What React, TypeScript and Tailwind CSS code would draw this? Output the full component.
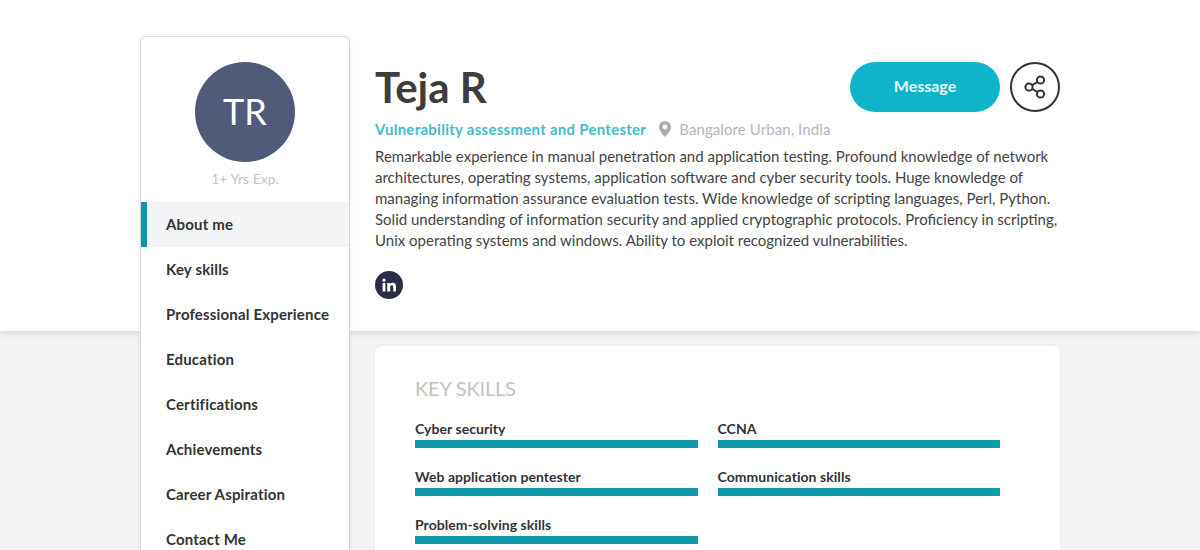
import React from "react";

const nav = ["About me", "Key skills", "Professional Experience", "Education", "Certifications", "Achievements", "Career Aspiration", "Contact Me"];
const skills = ["Cyber security", "CCNA", "Web application pentester", "Communication skills", "Problem-solving skills"];

export default function App() {
  return (
    <div className="h-[550px] overflow-hidden bg-[#f3f3f3] font-['Lato',sans-serif] text-[#333]">
      <div className="h-[331px] bg-white shadow-[0_1px_8px_rgba(0,0,0,0.14)]" />
      <div className="-mt-[331px] relative flex pt-[36px] pl-[140px]">
        <aside className="w-[210px] h-[700px] shrink-0 rounded-md border border-[#d6d6d6] bg-white shadow-[0_0_4px_rgba(0,0,0,0.08)]">
          <div className="flex flex-col items-center pt-[25px]">
            <div className="flex h-[100px] w-[100px] items-center justify-center rounded-full bg-[#4f5b78] pb-[2px] text-[36px] text-white">TR</div>
            <div className="mt-[7px] text-[14px] leading-[20px] text-[#c4c4c4]">1+ Yrs Exp.</div>
          </div>
          <nav className="mt-[13px]">
            {nav.map((n, i) => (
              <div
                key={n}
                className={
                  i === 0
                    ? "flex h-[45px] items-center border-l-[6px] border-[#0e98a8] bg-[#f3f4f6] pl-[19px] text-[15px] font-bold tracking-[0.17px] text-[#333]"
                    : "flex h-[45px] items-center pl-[25px] text-[15px] font-bold tracking-[0.17px] text-[#333]"
                }
              >
                {n}
              </div>
            ))}
          </nav>
        </aside>
        <main className="ml-[25px] w-[685px] shrink-0">
          <div className="h-[295px]">
            <div className="flex items-start justify-between">
              <h1 className="mt-[25px] text-[42px] font-bold leading-[52px] text-[#3d3d3d]">Teja R</h1>
              <div className="mt-[26px] flex gap-[10px]">
                <button className="h-[50px] w-[150px] rounded-full bg-[#0fb3ca] pb-[2px] text-[16px] font-bold text-white/90">Message</button>
                <button className="flex h-[50px] w-[50px] items-center justify-center rounded-full border-2 border-[#333] bg-white">
                  <svg width="24" height="24" viewBox="0 0 24 24" fill="none" stroke="#333" strokeWidth="2">
                    <circle cx="17.5" cy="5" r="3.6" />
                    <circle cx="6" cy="12" r="3.6" />
                    <circle cx="17.5" cy="19" r="3.6" />
                    <path d="M9.2 10.2 14.4 7M9.2 13.8l5.2 3.2" />
                  </svg>
                </button>
              </div>
            </div>
            <div className="mt-[5px] flex items-center text-[15px] leading-[22px]">
              <span className="font-bold tracking-[0.27px] text-[#45bccb]">Vulnerability assessment and Pentester</span>
              <svg className="ml-[13px]" width="12" height="16" viewBox="0 0 12 16">
                <path fillRule="evenodd" fill="#a9adb3" d="M6 0a6 6 0 0 0-6 6c0 3.6 4.2 8.1 6 10 1.8-1.9 6-6.4 6-10a6 6 0 0 0-6-6Zm0 3.6a2.4 2.4 0 1 1 0 4.8 2.4 2.4 0 0 1 0-4.8Z" />
              </svg>
              <span className="ml-[8px] tracking-[0.09px] text-[#b4b7bd]">Bangalore Urban, India</span>
            </div>
            <p className="mt-[6px] text-[15px] leading-[21px] text-[#444]">
              Remarkable experience in manual penetration and application testing. Profound knowledge of network architectures, operating systems, application software and cyber security tools. Huge knowledge of managing information assurance evaluation tests. Wide knowledge of scripting languages, Perl, Python. Solid understanding of information security and applied cryptographic protocols. Proficiency in scripting, Unix operating systems and windows. Ability to exploit recognized vulnerabilities.
            </p>
            <div className="mt-[20px] flex h-[28px] w-[28px] items-center justify-center rounded-full bg-[#2a2d45]">
              <svg width="14" height="14" viewBox="0 0 24 24" fill="#fff">
                <path d="M1 8.5h4.8V23H1zM3.4 1a2.8 2.8 0 1 1 0 5.6 2.8 2.8 0 0 1 0-5.6ZM9 8.5h4.6v2c.7-1.3 2.3-2.4 4.7-2.4 4.9 0 5.7 3.2 5.7 7.4V23h-4.8v-6.6c0-1.7 0-3.9-2.4-3.9s-2.8 1.9-2.8 3.8V23H9z" />
              </svg>
            </div>
          </div>
          <section className="mt-[15px] h-[400px] rounded-md bg-white px-[40px] pt-[28px] shadow-[0_0_4px_rgba(0,0,0,0.05)]">
            <h2 className="text-[20px] leading-[28px] tracking-[-0.2px] text-[#c2c2c2]">KEY SKILLS</h2>
            <div className="mt-[16px] grid grid-cols-2">
              {skills.map((s) => (
                <div key={s} className="h-[48px] pr-[20px]">
                  <div className="text-[14px] font-bold leading-[22px] tracking-[0.05px] text-[#333]">{s}</div>
                  <div className="h-[8px] bg-[#0e98a8]" />
                </div>
              ))}
            </div>
          </section>
        </main>
      </div>
    </div>
  );
}
